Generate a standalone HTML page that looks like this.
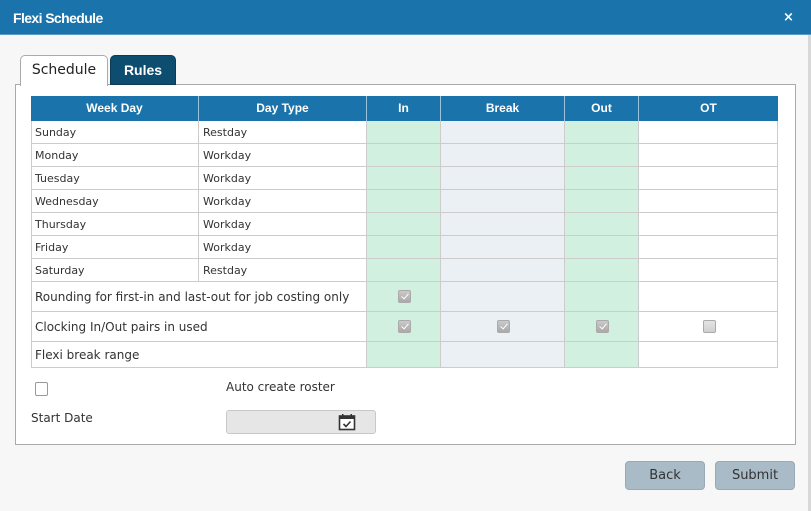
<!DOCTYPE html>
<html><head><meta charset="utf-8"><style>
*{margin:0;padding:0;box-sizing:border-box}
body{width:811px;height:511px;background:#f7f7f7;font-family:"DejaVu Sans","Liberation Sans",sans-serif;position:relative;overflow:hidden;color:#333}
.hdr{position:absolute;left:0;top:0;width:811px;height:35px;background:#1a74ab;border-bottom:1px solid #5a9cc6}
.hdr .t{position:absolute;left:13px;top:10px;color:#fff;font-weight:bold;font-size:14px;font-family:"Liberation Sans",sans-serif;letter-spacing:-0.6px}
.hdr .x{position:absolute;left:783px;top:10px;color:#fff;font-weight:bold;font-size:13px}
.rb{position:absolute;left:808px;top:35px;width:3px;height:476px;background:#d8d8d8}
.tab{position:absolute;font-size:14px;text-align:center;border-radius:5px 5px 0 0}
.t1{left:20px;top:55px;width:88px;height:31px;background:#fff;border:1px solid #aaa;border-bottom:none;line-height:29px;color:#222;z-index:2}
.t2{left:110px;top:55px;width:66px;height:30px;background:#0d4e70;border:1px solid #0a3c56;color:#fff;font-weight:bold;line-height:29px;font-family:"Liberation Sans",sans-serif}
.panel{position:absolute;left:15px;top:84px;width:781px;height:361px;background:#fff;border:1px solid #aaa}
.c{position:absolute;border-right:1px solid #ccc;border-bottom:1px solid #ccc;font-size:11px;padding-left:4px}
.h{position:absolute;top:96px;height:25px;background:#1a74ab;color:#fff;font-weight:bold;font-size:12px;text-align:center;line-height:25px;border-right:1px solid #9cc3dc;font-family:"Liberation Sans",sans-serif}
.g{background:#d2f0df}.b{background:#eaf0f3}
.cb{position:absolute;width:13px;height:13px;border:1px solid #aaa;border-radius:2px;background:linear-gradient(#c9c9c9,#a9a9a9)}
.cb::after{content:"";position:absolute;left:3.5px;top:1px;width:3px;height:6px;border:solid #fff;border-width:0 1.5px 1.5px 0;transform:rotate(40deg)}
.cb.e{background:linear-gradient(#e4e4e4,#cfcfcf)}.cb.e::after{display:none}
.btn{position:absolute;top:461px;height:29px;background:#a8bbc6;border:1px solid #98aab5;border-radius:4px;font-size:13px;text-align:center;line-height:27px;color:#333}
</style></head><body>
<div class="hdr"><div class="t">Flexi Schedule</div><div class="x">×</div></div>
<div class="rb"></div>
<div class="panel"></div>
<div class="tab t1">Schedule</div>
<div class="tab t2">Rules</div>

<div class="h" style="left:31px;width:168px">Week Day</div>
<div class="h" style="left:199px;width:168px">Day Type</div>
<div class="h" style="left:367px;width:74px">In</div>
<div class="h" style="left:441px;width:124px">Break</div>
<div class="h" style="left:565px;width:74px">Out</div>
<div class="h" style="left:639px;width:139px;border-right:none">OT</div>

<div style="position:absolute;left:31px;top:121px;width:747px;height:247px;border-left:1px solid #ccc;border-right:1px solid #ccc;border-bottom:1px solid #ccc;background:#fff"></div>
<div id="rows"></div>
<script>
var days=[["Sunday","Restday"],["Monday","Workday"],["Tuesday","Workday"],["Wednesday","Workday"],["Thursday","Workday"],["Friday","Workday"],["Saturday","Restday"]];
var h="";
function cell(l,t,w,ht,cls,txt,fs){h+='<div class="c '+cls+'" style="left:'+l+'px;top:'+t+'px;width:'+w+'px;height:'+ht+'px;line-height:'+(ht+1)+'px;'+(fs?'font-size:'+fs+'px;':'')+'">'+(txt||"")+'</div>';}
var y=121;
days.forEach(function(d){cell(31,y,168,23,"",d[0]);cell(199,y,168,23,"",d[1]);cell(367,y,74,23,"g");cell(441,y,124,23,"b");cell(565,y,74,23,"g");cell(639,y,139,23,"");y+=23;});
var ex=[["Rounding for first-in and last-out for job costing only",30],["Clocking In/Out pairs in used",30],["Flexi break range",26]];
ex.forEach(function(e){cell(31,y,336,e[1],"",e[0],12);cell(367,y,74,e[1],"g");cell(441,y,124,e[1],"b");cell(565,y,74,e[1],"g");cell(639,y,139,e[1],"");y+=e[1];});
document.getElementById("rows").innerHTML=h;
</script>
<div class="cb" style="left:398px;top:290px"></div>
<div class="cb" style="left:398px;top:320px"></div>
<div class="cb" style="left:497px;top:320px"></div>
<div class="cb" style="left:596px;top:320px"></div>
<div class="cb e" style="left:703px;top:320px;width:13px;height:13px"></div>

<div class="cb e" style="left:35px;top:382px;width:13px;height:14px;background:#fff;border-color:#999"></div>
<div style="position:absolute;left:226px;top:380px;font-size:12px">Auto create roster</div>
<div style="position:absolute;left:31px;top:411px;font-size:12px">Start Date</div>
<div style="position:absolute;left:226px;top:410px;width:150px;height:24px;background:#e6e6e6;border:1px solid #c8c8c8;border-radius:3px">
<svg style="position:absolute;left:111px;top:2px" width="18" height="18" viewBox="0 0 18 18"><rect x="1.5" y="3" width="15" height="13.5" fill="#fff" stroke="#333" stroke-width="1.6"/><rect x="1.5" y="3" width="15" height="3" fill="#333"/><rect x="4" y="1" width="1.5" height="3" fill="#333"/><rect x="12.5" y="1" width="1.5" height="3" fill="#333"/><path d="M5.5 11l2.5 2.5 4.5-5" stroke="#333" stroke-width="1.6" fill="none"/></svg>
</div>
<div class="btn" style="left:625px;width:80px">Back</div>
<div class="btn" style="left:715px;width:80px">Submit</div>
</body></html>
